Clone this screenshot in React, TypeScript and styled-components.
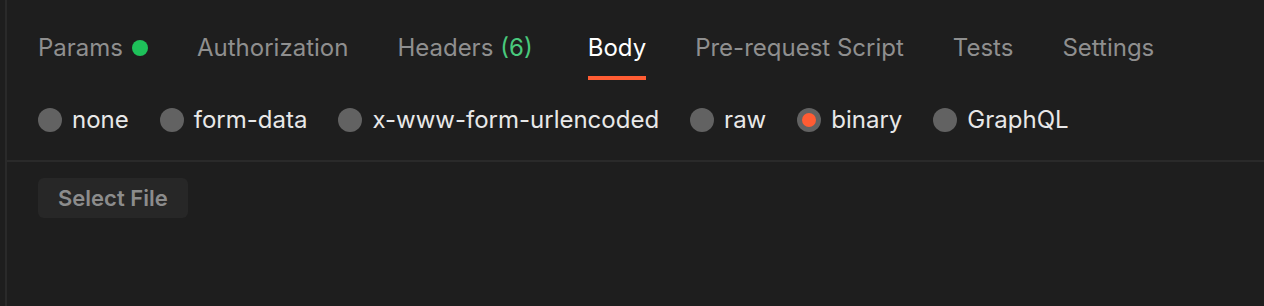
import * as React from "react";
import styled, { createGlobalStyle } from "styled-components";

const GlobalStyle = createGlobalStyle`
  html, body {
    margin: 0;
    padding: 0;
    background: #1e1e1e;
  }
  body {
    font-family: Inter, "Noto Sans", "Liberation Sans", sans-serif;
  }
`;

const tabs = [
  { label: "Params", dot: true },
  { label: "Authorization" },
  { label: "Headers", count: 6 },
  { label: "Body", active: true },
  { label: "Pre-request Script" },
  { label: "Tests" },
  { label: "Settings" },
];

const bodyTypes = [
  "none",
  "form-data",
  "x-www-form-urlencoded",
  "raw",
  "binary",
  "GraphQL",
];

const App: React.FunctionComponent = () => {
  const [active, setActive] = React.useState<string>("Body");
  const [bodyType, setBodyType] = React.useState<string>("binary");

  return (
    <>
      <GlobalStyle />
      <Page>
        <Panel>
          <TabBar>
            {tabs.map((tab) => (
              <Tab
                key={tab.label}
                $active={active === tab.label}
                onClick={() => setActive(tab.label)}
              >
                {tab.label}
                {tab.count !== undefined && <Count>({tab.count})</Count>}
                {tab.dot && <Dot />}
              </Tab>
            ))}
          </TabBar>
          <RadioRow>
            {bodyTypes.map((type) => (
              <RadioOption key={type} onClick={() => setBodyType(type)}>
                <Radio $checked={bodyType === type} />
                {type}
              </RadioOption>
            ))}
          </RadioRow>
          <Divider />
          <Content>
            <Button>Select File</Button>
          </Content>
        </Panel>
      </Page>
    </>
  );
};

export default App;

const Page = styled.div`
  height: 306px;
  padding-left: 5px;
  box-sizing: border-box;
  display: flex;
`;

const Panel = styled.div`
  flex: 1;
  border-left: 2px solid #2a2a2a;
  display: flex;
  flex-direction: column;
`;

const TabBar = styled.div`
  display: flex;
  gap: 49px;
  padding-left: 31px;
`;

const Tab = styled.div<{ $active?: boolean }>`
  display: flex;
  align-items: center;
  padding: 34px 0 14px;
  font-size: 24px;
  line-height: 28px;
  color: ${(p) => (p.$active ? "#ffffff" : "#8f8f8f")};
  border-bottom: 4px solid ${(p) => (p.$active ? "#ff5c33" : "transparent")};
  cursor: pointer;
  white-space: nowrap;
`;

const Count = styled.span`
  color: #49c97c;
  margin: 0 6px 0 7px;
`;

const Dot = styled.span`
  width: 16px;
  height: 16px;
  border-radius: 50%;
  background: #1ec15a;
  margin-left: 9px;
`;

const RadioRow = styled.div`
  display: flex;
  align-items: center;
  gap: 31px;
  padding: 28px 0 28px 31px;
`;

const RadioOption = styled.label`
  display: flex;
  align-items: center;
  gap: 10px;
  font-size: 24px;
  line-height: 24px;
  color: #e8e8e8;
  cursor: pointer;
  white-space: nowrap;
`;

const Radio = styled.span<{ $checked?: boolean }>`
  width: 24px;
  height: 24px;
  border-radius: 50%;
  background: #626262;
  display: flex;
  align-items: center;
  justify-content: center;

  &::after {
    content: "";
    width: 14px;
    height: 14px;
    border-radius: 50%;
    background: #ff5c33;
    display: ${(p) => (p.$checked ? "block" : "none")};
  }
`;

const Divider = styled.div`
  height: 2px;
  background: #2a2a2a;
`;

const Content = styled.div`
  padding: 16px 31px;
  display: flex;
`;

const Button = styled.button`
  height: 40px;
  padding: 0 20px;
  border: none;
  border-radius: 6px;
  background: #272727;
  color: #8c8c8c;
  font-family: Inter, "Noto Sans", "Liberation Sans", sans-serif;
  font-size: 22px;
  font-weight: 600;
  cursor: pointer;
`;
